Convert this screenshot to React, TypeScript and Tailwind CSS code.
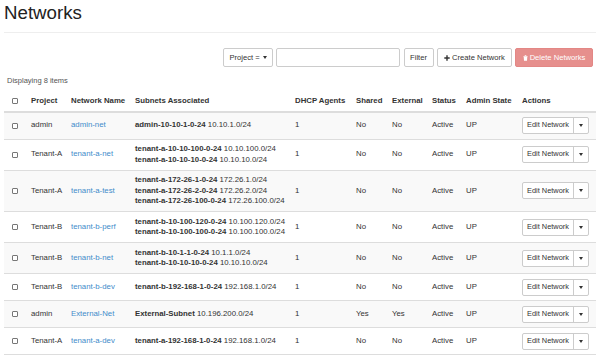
const rows = [
  { project: 'admin', name: 'admin-net', subnets: [['admin-10-10-1-0-24', '10.10.1.0/24']], shared: 'No', external: 'No' },
  {
    project: 'Tenant-A',
    name: 'tenant-a-net',
    subnets: [
      ['tenant-a-10-10-100-0-24', '10.10.100.0/24'],
      ['tenant-a-10-10-10-0-24', '10.10.10.0/24'],
    ],
    shared: 'No',
    external: 'No',
  },
  {
    project: 'Tenant-A',
    name: 'tenant-a-test',
    subnets: [
      ['tenant-a-172-26-1-0-24', '172.26.1.0/24'],
      ['tenant-a-172-26-2-0-24', '172.26.2.0/24'],
      ['tenant-a-172-26-100-0-24', '172.26.100.0/24'],
    ],
    shared: 'No',
    external: 'No',
  },
  {
    project: 'Tenant-B',
    name: 'tenant-b-perf',
    subnets: [
      ['tenant-b-10-100-120-0-24', '10.100.120.0/24'],
      ['tenant-b-10-100-100-0-24', '10.100.100.0/24'],
    ],
    shared: 'No',
    external: 'No',
  },
  {
    project: 'Tenant-B',
    name: 'tenant-b-net',
    subnets: [
      ['tenant-b-10-1-1-0-24', '10.1.1.0/24'],
      ['tenant-b-10-10-10-0-24', '10.10.10.0/24'],
    ],
    shared: 'No',
    external: 'No',
  },
  { project: 'Tenant-B', name: 'tenant-b-dev', subnets: [['tenant-b-192-168-1-0-24', '192.168.1.0/24']], shared: 'No', external: 'No' },
  { project: 'admin', name: 'External-Net', subnets: [['External-Subnet', '10.196.200.0/24']], shared: 'Yes', external: 'Yes' },
  { project: 'Tenant-A', name: 'tenant-a-dev', subnets: [['tenant-a-192-168-1-0-24', '192.168.1.0/24']], shared: 'No', external: 'No' },
];

function Caret() {
  return <span className="inline-block h-0 w-0 border-x-[2.5px] border-t-[3px] border-x-transparent border-t-[#333]" />;
}

function Checkbox() {
  return <span className="block h-[6px] w-[6px] rounded-[1px] border border-[#777] bg-white" />;
}

export default function App() {
  return (
    <div className="h-[359px] w-[600px] overflow-hidden bg-white px-[4px] font-['Liberation_Sans',Arial,sans-serif] text-[#333]">
      <div className="border-b border-[#eee] pb-[9.5px] pt-[1.5px]">
        <h1 className="text-[18.7px] leading-[21px] text-[#222]">Networks</h1>
      </div>

      <div className="mt-[15px] flex h-[19px] justify-end gap-[3px] pr-[3px] text-[7.6px] text-[#333]">
        <button className="flex w-[50px] items-center justify-center gap-[3px] rounded-[2px] border border-[#ccc] bg-white">
          Project = <Caret />
        </button>
        <input className="w-[124px] rounded-[2px] border border-[#ccc] bg-white" />
        <button className="ml-[0.5px] w-[30px] rounded-[2px] border border-[#ccc] bg-white">Filter</button>
        <button className="ml-[0.5px] flex w-[75px] items-center justify-center gap-[2px] rounded-[2px] border border-[#ccc] bg-white">
          <svg width="6" height="6" viewBox="0 0 6 6">
            <path d="M3 0.3V5.7M0.3 3H5.7" stroke="#333" strokeWidth="1.4" />
          </svg>
          Create Network
        </button>
        <button className="flex w-[78px] items-center justify-center gap-[2px] rounded-[2px] border border-[#e38785] bg-[#e68f8d] text-white">
          <svg width="5" height="6" viewBox="0 0 5 6">
            <path d="M0.3 1H4.7V1.5H0.3Z M1.7 0.3H3.3V1H1.7Z M0.7 1.8H4.3L4 5.8H1Z" fill="#fff" />
          </svg>
          Delete Networks
        </button>
      </div>

      <div className="mt-[9px] flex h-[10px] items-center pl-[3px] text-[length:7.5px] text-[color:#555]">
        <span>Displaying 8 items</span>
      </div>

      <table className="mt-[5px] w-[592px] table-fixed border-collapse text-left text-[7.8px] leading-[10.5px] text-[#333]">
        <colgroup>
          <col className="w-[23px]" />
          <col className="w-[40px]" />
          <col className="w-[64px]" />
          <col className="w-[160px]" />
          <col className="w-[61px]" />
          <col className="w-[36px]" />
          <col className="w-[40px]" />
          <col className="w-[34px]" />
          <col className="w-[56px]" />
          <col className="w-[78px]" />
        </colgroup>
        <thead>
          <tr className="border-b-2 border-[#ddd] font-bold">
            <th className="py-[4.5px] pl-[7.5px]">
              <Checkbox />
            </th>
            <th className="px-[4px] py-[4.5px]">Project</th>
            <th className="px-[4px] py-[4.5px]">Network Name</th>
            <th className="px-[4px] py-[4.5px]">Subnets Associated</th>
            <th className="px-[4px] py-[4.5px]">DHCP Agents</th>
            <th className="px-[4px] py-[4.5px]">Shared</th>
            <th className="px-[4px] py-[4.5px]">External</th>
            <th className="px-[4px] py-[4.5px]">Status</th>
            <th className="px-[4px] py-[4.5px]">Admin State</th>
            <th className="px-[4px] py-[4.5px]">Actions</th>
          </tr>
        </thead>
        <tbody>
          {rows.map((r, i) => (
            <tr key={r.name} className={`border-b border-[#ddd] ${i % 2 === 0 ? 'bg-[#f9f9f9]' : 'bg-white'}`}>
              <td className="py-[4.5px] pl-[7.5px]">
                <Checkbox />
              </td>
              <td className="px-[4px] py-[4.5px]">{r.project}</td>
              <td className="px-[4px] py-[4.5px] text-[#428bca]">{r.name}</td>
              <td className="whitespace-nowrap px-[4px] py-[4.5px]">
                {r.subnets.map(([n, c]) => (
                  <div key={n}>
                    <span className="font-bold">{n}</span> {c}
                  </div>
                ))}
              </td>
              <td className="px-[4px] py-[4.5px]">1</td>
              <td className="px-[4px] py-[4.5px]">{r.shared}</td>
              <td className="px-[4px] py-[4.5px]">{r.external}</td>
              <td className="px-[4px] py-[4.5px]">Active</td>
              <td className="px-[4px] py-[4.5px]">UP</td>
              <td className="px-[4px] py-[4.5px]">
                <div className="flex h-[17px] w-[67px] rounded-[2px] border border-[#ccc] bg-white text-[7.4px]">
                  <span className="flex w-[51px] items-center justify-center border-r border-[#ccc]">Edit Network</span>
                  <span className="flex flex-1 items-center justify-center">
                    <Caret />
                  </span>
                </div>
              </td>
            </tr>
          ))}
        </tbody>
      </table>
    </div>
  );
}
